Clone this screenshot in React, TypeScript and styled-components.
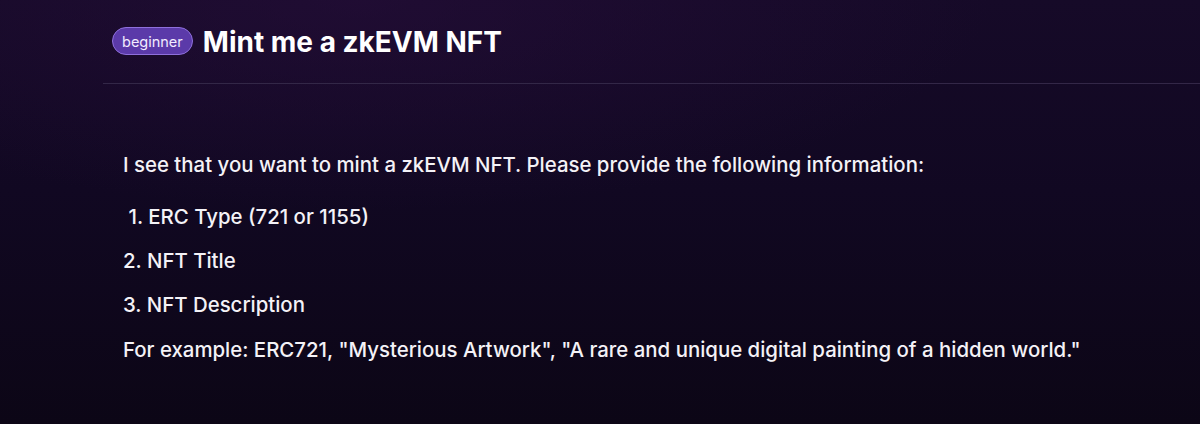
import React from "react";
import styled, { createGlobalStyle } from "styled-components";

const Global = createGlobalStyle`
  html, body { margin: 0; padding: 0; }
  body {
    width: 1200px;
    height: 424px;
    overflow: hidden;
    background: #0e0719;
    font-family: Inter, "Noto Sans", sans-serif;
    -webkit-font-smoothing: antialiased;
  }
`;

const Page = styled.div`
  width: 1200px;
  height: 424px;
  background:
    radial-gradient(ellipse 900px 300px at 30% 0%, rgba(40, 14, 60, 0.55), transparent 70%),
    linear-gradient(180deg, #160a28 0%, #110822 45%, #0c0616 100%);
  display: flex;
  flex-direction: column;
  padding-left: 103px;
  box-sizing: border-box;
`;

const Header = styled.header`
  height: 84px;
  border-bottom: 1px solid #332747;
  display: flex;
  align-items: flex-start;
  padding: 27px 0 0 9px;
  gap: 10px;
  box-sizing: border-box;
`;

const Badge = styled.span`
  height: 28px;
  padding: 0 9px;
  box-sizing: border-box;
  border-radius: 14px;
  background: #5b3aa9;
  border: 1.5px solid #8f70dc;
  color: #f1ecff;
  font-size: 14.5px;
  font-weight: 400;
  display: inline-flex;
  align-items: center;
`;

const Title = styled.h1`
  margin: 0;
  font-size: 28px;
  line-height: 30px;
  font-weight: 700;
  color: #ffffff;
`;

const Body = styled.div`
  padding: 68px 0 0 20px;
  display: flex;
  flex-direction: column;
  color: #f4f2f7;
  font-size: 20.4px;
  font-weight: 500;
  line-height: 26px;
`;

const Para = styled.p<{ $gap?: number }>`
  margin: 0;
  margin-top: ${(p) => p.$gap ?? 0}px;
`;

export default function App() {
  return (
    <>
      <Global />
      <Page>
        <Header>
          <Badge>beginner</Badge>
          <Title>Mint me a zkEVM NFT</Title>
        </Header>
        <Body>
          <Para>I see that you want to mint a zkEVM NFT. Please provide the following information:</Para>
          <Para $gap={26}>&nbsp;1. ERC Type (721 or 1155)</Para>
          <Para $gap={18}>2. NFT Title</Para>
          <Para $gap={18}>3. NFT Description</Para>
          <Para $gap={19}>For example: ERC721, "Mysterious Artwork", "A rare and unique digital painting of a hidden world."</Para>
        </Body>
      </Page>
    </>
  );
}
